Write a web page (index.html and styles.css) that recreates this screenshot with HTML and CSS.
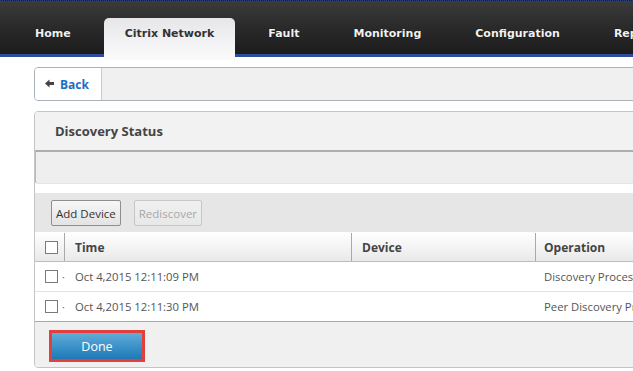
FILE: index.html
```html
<!DOCTYPE html>
<html lang="en">
<head>
<meta charset="utf-8">
<title>Discovery Status</title>
<link rel="stylesheet" href="styles.css">
</head>
<body>
<nav class="topnav">
  <a class="tab">Home</a>
  <a class="tab active">Citrix Network</a>
  <a class="tab">Fault</a>
  <a class="tab">Monitoring</a>
  <a class="tab">Configuration</a>
  <a class="tab">Reports</a>
</nav>
<main class="content">
  <div class="backbar">
    <a class="back">
      <svg class="back-icon" width="9" height="9" viewBox="0 0 9 9"><path d="M0 4.5 L4.5 0.5 L4.5 3 L9 3 L9 6 L4.5 6 L4.5 8.5 Z" fill="#444"/></svg>
      Back
    </a>
    <div class="backfill"></div>
  </div>
  <section class="panel">
    <header class="panel-title">Discovery Status</header>
    <div class="filterbox"></div>
    <div class="spacer"></div>
    <div class="toolbar">
      <button class="btn">Add Device</button>
      <button class="btn" disabled>Rediscover</button>
    </div>
    <div class="grid">
      <div class="grid-row grid-head">
        <div class="cell cell-check"><span class="checkbox"></span></div>
        <div class="cell">Time</div>
        <div class="cell">Device</div>
        <div class="cell">Operation</div>
      </div>
      <div class="grid-row">
        <div class="cell cell-check"><span class="checkbox"></span><span class="dot">·</span></div>
        <div class="cell">Oct 4,2015 12:11:09 PM</div>
        <div class="cell"></div>
        <div class="cell">Discovery Process</div>
      </div>
      <div class="grid-row last">
        <div class="cell cell-check"><span class="checkbox"></span><span class="dot">·</span></div>
        <div class="cell">Oct 4,2015 12:11:30 PM</div>
        <div class="cell"></div>
        <div class="cell">Peer Discovery Process</div>
      </div>
    </div>
    <footer class="panel-footer">
      <button class="done">Done</button>
    </footer>
  </section>
</main>
</body>
</html>
```

FILE: styles.css
```css
html, body {
  margin: 0;
  padding: 0;
  overflow: hidden;
  background: #ffffff;
}
body {
  font-family: "Open Sans", "Noto Sans", sans-serif;
  width: 633px;
  height: 371px;
}
.topnav {
  display: flex;
  align-items: flex-start;
  gap: 12px;
  padding-left: 14px;
  height: 54px;
  border-bottom: 3px solid #2f4c9c;
  background: linear-gradient(#3c3c3c, #2a2a2a 50%, #1c1c1c);
  position: relative;
  white-space: nowrap;
}
.topnav::before {
  content: "";
  position: absolute;
  left: 0; right: 0; top: 0;
  height: 1px;
  background: repeating-linear-gradient(90deg, #2b3e74 0 1px, #1a1f2c 1px 2px);
}
.tab {
  font-family: "DejaVu Sans", Verdana, sans-serif;
  font-weight: bold;
  font-size: 11px;
  line-height: 13px;
  color: #f2f2f2;
  margin-top: 18px;
  padding: 9px 21px 0;
  height: 30px;
  text-shadow: 0 0 1px #000;
}
.tab.active {
  color: #333;
  text-shadow: none;
  background: linear-gradient(#e6e6e9, #f3f3f5 60%, #fbfbfb);
  border-radius: 5px 5px 0 0;
  height: 33px;
  position: relative;
  z-index: 1;
}
.content {
  padding: 10px 0 0 34px;
}
.backbar {
  display: flex;
  width: 700px;
  height: 32px;
  border: 1px solid #a8b0b8;
  border-radius: 4px;
  overflow: hidden;
}
.back {
  display: flex;
  align-items: center;
  gap: 6px;
  width: 56px;
  padding-left: 10px;
  background: #fff;
  border-right: 1px solid #c8ccd0;
  color: #1b6fc2;
  font-weight: bold;
  font-size: 12px;
}
.back-icon {
  margin-top: -1px;
}
.backfill {
  flex: 1;
  background: #f0f0f0;
}
.panel {
  margin-top: 10px;
  width: 700px;
  border: 1px solid #c4c4c4;
  border-radius: 4px;
  overflow: hidden;
}
.panel-title {
  height: 38px;
  background: #f2f2f2;
  font-weight: bold;
  font-size: 13px;
  color: #444;
  line-height: 39px;
  padding-left: 20px;
}
.filterbox {
  height: 31px;
  background: #efefef;
  border-top: 2px solid #a9aeb3;
  border-left: 1px solid #b8bcc0;
  border-bottom: 1px solid #e4e4e4;
  border-radius: 0 0 0 3px;
}
.spacer {
  height: 9px;
  background: #fff;
}
.toolbar {
  display: flex;
  gap: 13px;
  height: 39px;
  padding: 7px 0 0 16px;
  box-sizing: border-box;
  background: #e6e6e6;
}
.btn {
  font-family: "Open Sans", "Noto Sans", sans-serif;
  font-size: 11.5px;
  height: 26px;
  padding: 0 4px;
  border: 1px solid #8e8e8e;
  border-radius: 2px;
  background: linear-gradient(#f7f7f7, #e3e3e3);
  color: #333;
}
.btn:disabled {
  border-color: #c6c6c6;
  color: #a8a8a8;
  background: linear-gradient(#f0f0f0, #e8e8e8);
}
.grid-row {
  display: grid;
  grid-template-columns: 29px 287px 184px 1fr;
  height: 29px;
  border-bottom: 1px solid #e2e2e2;
  font-size: 11.3px;
  color: #555;
  background: #fff;
}
.grid-row.last {
  border-bottom: 1px solid #a8a8a8;
}
.grid-head {
  height: 28px;
  border-bottom: 1px solid #bdbdbd;
  background: linear-gradient(#ffffff, #f4f4f4 50%, #e9e9e9);
  font-weight: bold;
  color: #444;
  font-size: 12px;
  padding-top: 1px;
}
.cell {
  display: flex;
  align-items: center;
  padding-left: 10px;
  white-space: nowrap;
  border-left: 1px solid transparent;
}
.cell:nth-child(4) {
  padding-left: 8px;
}
.grid-head .cell + .cell {
  border-left-color: #a9a9a9;
}
.cell-check {
  padding-left: 10px;
  border-left: none;
  gap: 4px;
}
.checkbox {
  width: 11px;
  height: 11px;
  border: 1px solid #7a7a7a;
  background: #fff;
  flex: none;
}
.dot {
  color: #666;
  font-size: 11px;
}
.panel-footer {
  height: 45px;
  background: #f0f0f0;
  padding: 8px 0 0 14px;
  box-sizing: border-box;
}
.done {
  width: 96px;
  height: 32px;
  border: 3px solid #e2403a;
  background: linear-gradient(#62acd9, #3d93c9 50%, #2079b6);
  color: #fff;
  font-family: "Open Sans", "Noto Sans", sans-serif;
  font-size: 12.5px;
  padding: 0;
}
```
